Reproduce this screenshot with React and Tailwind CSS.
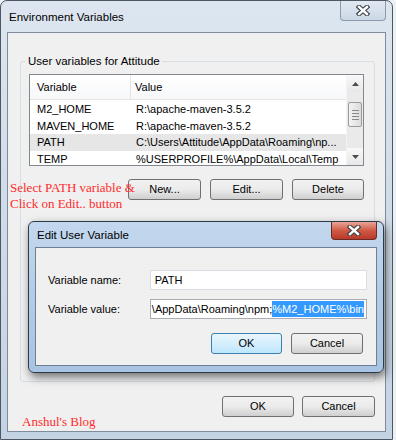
import React from 'react';

const ui = { fontFamily: '"Liberation Sans", Arial, sans-serif' };
const serif = { fontFamily: '"Liberation Serif", "Times New Roman", serif' };

const CloseGlyph = () => (
  <svg width="14" height="11" viewBox="0 0 14 11">
    <path d="M3 2 L11 9 M11 2 L3 9" stroke="#3b3f45" strokeWidth="4.6" strokeLinecap="square" fill="none" />
    <path d="M3 2 L11 9 M11 2 L3 9" stroke="#ffffff" strokeWidth="2.4" strokeLinecap="square" fill="none" />
  </svg>
);

const Button = ({ children, className = '', focus = false }) => (
  <div
    className={`flex items-center justify-center h-[21px] rounded-[3px] border text-[11px] text-black ${
      focus
        ? 'border-[#3c7fb1] bg-gradient-to-b from-[#eaf6fd] to-[#bee6fd]'
        : 'border-[#707070] bg-gradient-to-b from-[#f2f2f2] via-[#ebebeb] to-[#cfcfcf]'
    } ${className}`}
  >
    {children}
  </div>
);

const rows = [
  { name: 'M2_HOME', value: 'R:\\apache-maven-3.5.2' },
  { name: 'MAVEN_HOME', value: 'R:\\apache-maven-3.5.2' },
  { name: 'PATH', value: 'C:\\Users\\Attitude\\AppData\\Roaming\\np...', selected: true },
  { name: 'TEMP', value: '%USERPROFILE%\\AppData\\Local\\Temp' },
];

export default function App() {
  return (
    <div className="relative w-[396px] h-[440px] overflow-hidden bg-[#eef1f4] text-black" style={ui}>
      {/* Environment Variables window */}
      <div className="w-[393px] h-[440px] rounded-t-[7px] border border-[#4f5862] bg-gradient-to-b from-[#dde6f0] via-[#cfdbe8] to-[#c4d3e4] px-[6px] flex flex-col">
        <div className="h-[31px] flex items-start justify-between">
          <span className="pl-[2px] pt-[9px] text-[11.5px] leading-[15px]">Environment Variables</span>
          <div className="w-[46px] h-[20px] rounded-b-[4px] border border-t-0 border-[#8d9aab] bg-gradient-to-b from-[#e1e9f2] to-[#cbd7e5] flex items-center justify-center">
            <CloseGlyph />
          </div>
        </div>

        <div className="flex-1 border border-[#7d8b9b] bg-[#f0f0f0] mb-[7px] flex flex-col pl-[12px] pt-[28px]">
          {/* group box */}
          <div className="relative w-[355px] h-[321px] border border-[#d5dfe5] rounded-[3px] pl-[8px] pt-[12px]">
            <span className="absolute -top-[9px] left-[5px] bg-[#f0f0f0] px-[2px] text-[11.5px] leading-[16px]">
              User variables for Attitude
            </span>

            {/* list view */}
            <div className="w-[335px] h-[92px] border border-[#828790] bg-white flex overflow-hidden">
              <div className="flex-1 flex flex-col">
                <div className="h-[25px] shrink-0 flex border-b border-[#e5e5e5] bg-gradient-to-b from-white to-[#f7f8fa] text-[11px]">
                  <div className="w-[101px] border-r border-[#e5e5e5] pl-[7px] flex items-center">Variable</div>
                  <div className="pl-[4px] flex items-center">Value</div>
                </div>
                <div className="pt-[1px]">
                  {rows.map((r) => (
                    <div
                      key={r.name}
                      className={`h-[16.7px] flex items-center text-[11px] whitespace-nowrap ${r.selected ? 'bg-[#e6e6e6]' : ''}`}
                    >
                      <div className="w-[101px] pl-[7px]">{r.name}</div>
                      <div className="pl-[5px]">{r.value}</div>
                    </div>
                  ))}
                </div>
              </div>
              {/* scrollbar */}
              <div className="w-[17px] shrink-0 flex flex-col bg-[#eaeaea] border-l border-[#f3f3f3]">
                <div className="h-[17px] flex items-center justify-center bg-gradient-to-b from-[#f8f8f8] to-[#e8e8e8]">
                  <svg width="7" height="4" viewBox="0 0 7 4"><path d="M0 4 L3.5 0 L7 4 Z" fill="#4d4d4d" /></svg>
                </div>
                <div className="h-[10px]" />
                <div className="mx-[1px] h-[25px] rounded-[2px] border border-[#9b9b9b] bg-gradient-to-r from-[#f3f3f3] to-[#dcdcdc] flex flex-col items-center justify-center gap-[2px]">
                  <div className="w-[7px] h-[1px] bg-[#8a8a8a]" />
                  <div className="w-[7px] h-[1px] bg-[#8a8a8a]" />
                  <div className="w-[7px] h-[1px] bg-[#8a8a8a]" />
                  <div className="w-[7px] h-[1px] bg-[#8a8a8a]" />
                </div>
                <div className="flex-1" />
                <div className="h-[17px] flex items-center justify-center bg-gradient-to-b from-[#f8f8f8] to-[#e8e8e8]">
                  <svg width="7" height="4" viewBox="0 0 7 4"><path d="M0 0 L3.5 4 L7 0 Z" fill="#4d4d4d" /></svg>
                </div>
              </div>
            </div>

            <div className="w-[335px] mt-[13px] flex justify-end gap-[9px]">
              <Button className="w-[73px]">New...</Button>
              <Button className="w-[73px]">Edit...</Button>
              <Button className="w-[72px]">Delete</Button>
            </div>
          </div>

          <div className="w-[355px] mt-[14px] flex justify-end gap-[8px]">
            <Button className="w-[72px]">OK</Button>
            <Button className="w-[73px]">Cancel</Button>
          </div>
        </div>
      </div>

      {/* annotation */}
      <div className="absolute left-[10px] top-[180px] text-[13px] leading-[16px] text-[#ff2b2b]" style={serif}>
        <div>Select PATH variable &amp;</div>
        <div>Click on Edit.. button</div>
      </div>
      <div className="absolute left-[22px] top-[414px] text-[13px] leading-[15px] text-[#ff2b2b]" style={serif}>
        Anshul's Blog
      </div>

      {/* Edit User Variable dialog */}
      <div className="absolute left-[28px] top-[221px] w-[356px] h-[152px] rounded-[6px] border border-[#2d3a48] bg-gradient-to-b from-[#c3d8ee] via-[#b2cbe6] to-[#a9c4e2] px-[6px] pb-[6px] flex flex-col shadow-[2px_4px_10px_rgba(0,0,0,0.55)]">
        <div className="h-[25px] flex items-start justify-between">
          <span className="pl-[2px] pt-[6px] text-[11.5px] leading-[15px]">Edit User Variable</span>
          <div className="w-[46px] h-[18px] rounded-b-[4px] border border-t-0 border-[#6b2a22] bg-gradient-to-b from-[#e8a497] via-[#cf5a45] to-[#b8392a] flex items-center justify-center">
            <CloseGlyph />
          </div>
        </div>
        <div className="flex-1 border border-[#6e7f92] bg-[#f0f0f0] pl-[12px] pr-[9px] pt-[22px]">
          <div className="flex items-center h-[20px]">
            <span className="w-[102px] text-[11px]">Variable name:</span>
            <div className="w-[218px] h-[20px] border border-[#d7dde3] bg-white flex items-center pl-[4px] text-[11px]">PATH</div>
          </div>
          <div className="flex items-center h-[20px] mt-[9px]">
            <span className="w-[102px] text-[11px]">Variable value:</span>
            <div className="w-[218px] h-[20px] border border-[#abadb3] bg-white flex items-center justify-end overflow-hidden pr-[2px] text-[11px] whitespace-nowrap">
              <span>\AppData\Roaming\npm;</span>
              <span className="bg-[#3399ff] text-white">%M2_HOME%\bin</span>
            </div>
          </div>
          <div className="mt-[14px] flex justify-end gap-[9px] pr-[4px]">
            <Button focus className="w-[71px]">OK</Button>
            <Button className="w-[72px]">Cancel</Button>
          </div>
        </div>
      </div>
    </div>
  );
}
